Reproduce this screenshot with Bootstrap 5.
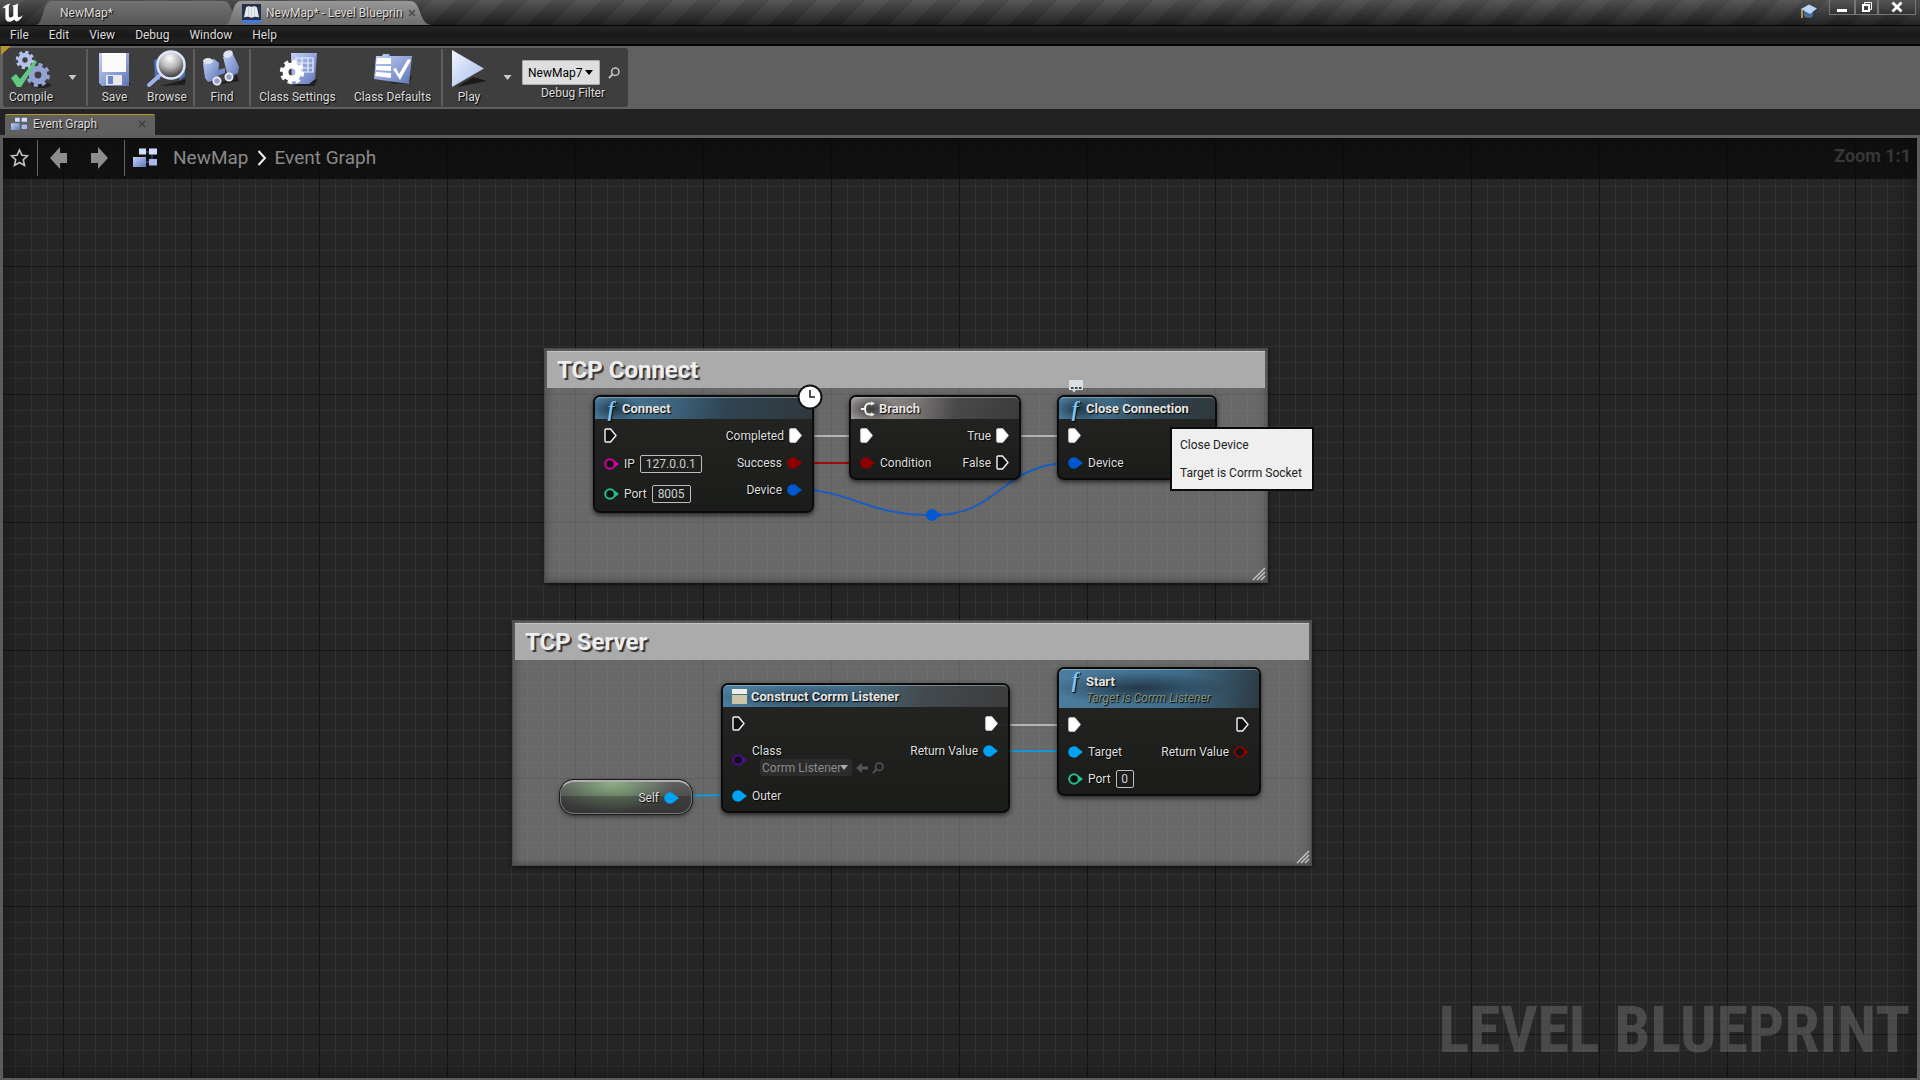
<!DOCTYPE html>
<html lang="en">
<head>
<meta charset="utf-8">
<meta name="viewport" content="width=device-width, initial-scale=1">
<title>NewMap* - Level Blueprint</title>
<link href="https://cdn.jsdelivr.net/npm/bootstrap@5.3.0/dist/css/bootstrap.min.css" rel="stylesheet">
<style>
body{font-family:Roboto,"Liberation Sans",sans-serif;font-size:12px;line-height:16px;color:#dcdcdc;background:#222;height:100vh;min-height:900px;overflow:hidden}
a{color:inherit;text-decoration:none}
button{background:none;border:0;padding:0;color:inherit;font:inherit}
svg{display:block;flex:none}
.shade{text-shadow:1px 1px 1px #000}

/* title bar */
.titlebar{height:25px;background:linear-gradient(rgba(255,255,255,.14),rgba(0,0,0,.4)),repeating-linear-gradient(135deg,#3b3b3b 0 17px,#303030 17px 34px)}
.ue-logo{width:36px;padding:3px 0 0 2px}
.wintab{position:relative;height:24px;margin-top:1px;padding-left:24px;gap:5px}
.wintab>svg.shape{position:absolute;left:0;top:0}
.wintab>*{position:relative}
.wintab.first{width:196px}
.wintab.active-win{width:206px;margin-left:-7px;padding-left:17px}
.closex{color:#555;font-size:12px}
.winbtn{height:15px;border:1px solid #777;border-top:0;background:linear-gradient(#555,#333);display:flex;align-items:center;justify-content:center}
.hat{margin:4px 11px 0 0}

/* menu */
.menubar{height:21px;border-top:1px solid #000;border-bottom:2px solid #050505;background:linear-gradient(#262626,#191919 50%,#222);padding-left:10px;gap:20px}

/* tool bar */
.toolstrip{background:#606060;padding:2px 0 2px 3px;height:63px}
.toolpanel{position:relative;background:#3e3e3e;border-radius:3px;height:59px;width:625px}
.corner{position:absolute;left:-2px;top:-2px}
.tool{display:flex;flex-direction:column;align-items:center;justify-content:flex-end;height:57px;text-shadow:1px 1px 1px #000;white-space:nowrap}
.tool svg{margin-bottom:1px}
.vsep{width:2px;height:57px;margin-top:1px;background:#5c5c5c}
.caret{width:8px;height:5px;background:#c8c8c8;clip-path:polygon(0 0,100% 0,50% 100%)}
.debug-select{width:78px;height:25px;border:1px solid #aaa;background:#dedede url("data:image/svg+xml,%3Csvg xmlns='http://www.w3.org/2000/svg' width='8' height='5'%3E%3Cpath d='M0 0h8L4 5z'/%3E%3C/svg%3E") no-repeat right 6px center;appearance:none;color:#000;padding:0 0 0 5px;font:inherit;border-radius:1px}

/* document tab */
.doctabs{height:26px;padding:5px 0 0 5px}
.doctab{width:150px;height:21px;background:#606060;border-top:1px solid #b49b1e;border-radius:2px 2px 0 0;padding:0 9px 2px 6px;gap:6px}

/* graph */
.graph{position:relative;border:3px solid #5c5c5c;border-bottom-width:2px;flex:1 1 auto;overflow:hidden;
 background-color:#262626;
 background-image:linear-gradient(90deg,#151515 1px,transparent 1px),linear-gradient(#151515 1px,transparent 1px),linear-gradient(90deg,#323232 1px,transparent 1px),linear-gradient(#323232 1px,transparent 1px);
 background-size:128px 128px,128px 128px,16px 16px,16px 16px;background-position:60px 0,0 0,12px 0,0 0}
.vignette{position:absolute;inset:0;box-shadow:inset 0 0 34px rgba(0,0,0,.45);pointer-events:none}
.crumbs{position:relative;height:41px;background:rgba(8,8,8,.72);color:#8a8a8a;font-size:19px;line-height:24px;padding:0 6px 2px 7px}
.crumbs .bar{width:1px;height:36px;background:#666}
.zoomtxt{color:#373737;font-size:18px;font-weight:700;padding-bottom:4px}
.watermark{position:absolute;right:7px;bottom:11px;font-family:"Roboto Condensed","Liberation Sans Narrow",Roboto,sans-serif;font-size:64px;line-height:72px;font-weight:700;color:rgba(160,160,160,.3);white-space:nowrap}

.remark{position:absolute;background:rgba(170,170,170,.5);border:1px solid #4c4c4c;padding:2px;box-shadow:0 2px 5px rgba(0,0,0,.6),inset 0 0 8px rgba(0,0,0,.35)}
.remark h2{margin:0;height:37px;background:#ababab;border-top:1px solid #c4c4c4;color:#eee;font-size:24px;font-weight:700;line-height:36px;padding-left:10px;text-shadow:2px 2px 1px #333}
.grip{position:absolute;right:1px;bottom:1px}
#c1{left:541px;top:210px;width:724px;height:235px}
#c2{left:509px;top:482px;width:800px;height:246px}
.wires{position:absolute;left:0;top:0}

.node{position:absolute;border:2px solid #0b0b0b;border-radius:7px;background:linear-gradient(rgba(33,34,32,.95),rgba(24,26,23,.97));box-shadow:0 2px 5px rgba(0,0,0,.65);color:#dedede;text-shadow:1px 1px 1px #000}
.nhead{display:flex;align-items:center;height:22px;border-radius:5px 5px 0 0;font-size:13px;font-weight:700;color:#e6e6e6;padding-left:9px;gap:4px;border-top:1px solid rgba(190,215,230,.45)}
.blue{background:radial-gradient(ellipse 26px 13px at 20px 11px,rgba(20,32,42,.75),transparent),linear-gradient(100deg,#4c7d9e 0,#3e657f 35%,#2f4452 60%,#30383c)}
.grey{background:radial-gradient(ellipse 26px 13px at 20px 11px,rgba(40,36,36,.8),transparent),linear-gradient(100deg,#a09c9c 0,#777373 40%,#4a4949 62%,#3b3b3b)}
.steel{background:radial-gradient(ellipse 90px 12px at 80px 12px,rgba(20,32,42,.55),transparent),linear-gradient(100deg,#4c7d9e 0,#44708c 40%,#434a4e 70%,#3c3c3c)}
.tall{height:39px;align-items:flex-start;background:radial-gradient(ellipse 90px 16px at 80px 18px,rgba(20,32,42,.7),transparent),linear-gradient(100deg,#4c7d9e 0,#3f6c8a 60%,#2c3a42)}
.fn{font-family:"Liberation Serif",serif;font-style:italic;font-weight:700;font-size:20px;line-height:20px;color:#7cc4f5;width:14px;text-align:center}
.sub{font-size:12px;font-weight:400;font-style:italic;color:#83917b}
.nbody{display:flex;justify-content:space-between;padding:3px 10px 2px 9px}
.pin{display:flex;align-items:center;height:27px;gap:5px}
.pin.out{justify-content:flex-end}
.pin.field{height:30px}
.pin.classrow{height:45px}
.slot{width:15px;display:flex;flex:none}
.pinbox{height:18px;background:transparent;border:1px solid #bdbdbd;border-radius:2px;color:#cfcfcf;font:inherit;padding:0;text-align:center}
.class-select{width:92px;height:17px;border:0;border-radius:3px;appearance:none;color:#8b8b8b;font:inherit;line-height:16px;padding:0 0 0 2px;background:#2b2c2b url("data:image/svg+xml,%3Csvg xmlns='http://www.w3.org/2000/svg' width='8' height='5'%3E%3Cpath fill='%23aaa' d='M0 0h8L4 5z'/%3E%3C/svg%3E") no-repeat right 4px center}
#n-connect{left:590px;top:257px;width:221px}
#n-branch{left:846px;top:257px;width:172px}
#n-close{left:1054px;top:257px;width:160px}
#n-construct{left:718px;top:545px;width:289px}
#n-start{left:1054px;top:529px;width:204px}
#n-self{left:557px;top:642px;width:132px;height:34px;border-radius:14px;border:1px solid #777;border-top:2px solid #b0b0b0;padding-right:12px;background:linear-gradient(rgba(255,255,255,.1),rgba(255,255,255,.02) 45%,rgba(0,0,0,.2) 46%,rgba(0,0,0,.3)),radial-gradient(ellipse 62px 30px at 52px 2px,#7fa577,transparent),#4c4c4c;box-shadow:0 0 0 1px #1c1c1c,0 2px 5px rgba(0,0,0,.6)}
.latent{position:absolute;right:-11px;top:-13px}
.bubble{position:absolute;left:9px;top:-17px}
.tipbox{position:absolute;left:1167px;top:289px;background:#efefef;border:2px solid #0a0a0a;color:#222;padding:7px 8px;line-height:18px;white-space:nowrap;width:144px}
.tipbox p{margin:0 0 10px}
.tipbox p:last-child{margin:0}
</style>
</head>
<body class="d-flex flex-column">

<svg width="0" height="0" class="position-absolute" aria-hidden="true">
 <defs>
  <linearGradient id="gBlue" x1="0" y1="0" x2="1" y2="1"><stop offset="0" stop-color="#c3d2fb"/><stop offset="1" stop-color="#6076b5"/></linearGradient>
  <linearGradient id="gPlay" x1="0" y1="0" x2="1" y2="1"><stop offset="0" stop-color="#f0f4ff"/><stop offset="1" stop-color="#a5bde8"/></linearGradient>
  <linearGradient id="gTab" x1="0" y1="0" x2="0" y2="1"><stop offset="0" stop-color="#727272"/><stop offset="1" stop-color="#565656"/></linearGradient>
  <linearGradient id="gTabA" x1="0" y1="0" x2="0" y2="1"><stop offset="0" stop-color="#989898"/><stop offset="1" stop-color="#6e6e6e"/></linearGradient>
  <radialGradient id="gLens" cx=".45" cy=".25" r=".8"><stop offset="0" stop-color="#fff"/><stop offset=".45" stop-color="#b5b5b5"/><stop offset="1" stop-color="#1c1c1c"/></radialGradient>
  <g id="cog">
   <circle r="6.500" fill="none" stroke-width="6"/>
   <circle r="10.200" fill="none" stroke-width="4" stroke-dasharray="4.200 3.810"/>
  </g>
  <symbol id="exec" viewBox="0 0 13 15"><path d="M2 1h4.500L12 7.500 6.500 14H2a1 1 0 0 1-1-1V2a1 1 0 0 1 1-1z" stroke="#f4f4f4" stroke-width="1.400" stroke-linejoin="round"/></symbol>
  <symbol id="dot" viewBox="0 0 15 12"><circle cx="6" cy="6" r="4.800" stroke="currentColor" stroke-width="2"/><path d="M11 3l4 3-4 3z" fill="currentColor"/></symbol>
  <symbol id="graphico" viewBox="0 0 24 20"><path d="M7 4h12M19 4v12M7 14h12" stroke="#5a6a9c" fill="none"/><path d="M6 .5h7v6H6zM16 .5h8v6h-8z" fill="#d3defb"/><path d="M0 9h13v10H0z" fill="url(#gBlue)"/><path d="M16 11h8v6.500h-8z" fill="#a9b9ee"/></symbol>
  <symbol id="mag" viewBox="0 0 14 14"><circle cx="8.500" cy="5.500" r="4.300" fill="none" stroke="currentColor" stroke-width="1.800"/><path d="M5.500 8.500L1 13" stroke="currentColor" stroke-width="2.200"/></symbol>
 </defs>
</svg>

<header class="titlebar d-flex align-items-start flex-shrink-0">
 <div class="ue-logo"><svg width="22" height="19" viewBox="0 0 22 19" fill="#fff"><path d="M0 6C1.500 3 4.500 1.200 8.500.500 7 1.800 6.800 2.500 6.800 4v8.500c0 1.300.6 1.900 1.500 1.900 1 0 2.200-.7 3-1.700V4.400c0-.9-.3-1.300-1.300-1.600C12.500 2.200 14.800 1.400 16.500 0c-.5.900-.7 1.500-.7 2.800v9.700c0 1.200.5 1.700 1.300 1.700.9 0 2.200-.6 3.900-2.200-1.700 3.500-3.800 5.700-6.400 6.500-1-.4-1.800-1-2.300-1.900-1.300 1.300-2.900 2-4.800 2.100C4.700 18.700 3.400 17 3.400 14.500V6.200C3.400 5.200 3 4.800 2.300 4.800 1.600 4.800.8 5.200 0 6z"/></svg></div>
 <div class="wintab first d-flex align-items-center shade"><svg class="shape" width="202" height="24"><path d="M0 24C8 23 6 0 16 0H188c8 0 8 16 14 24z" fill="url(#gTab)"/></svg><a href="#">NewMap*</a></div>
 <div class="wintab active-win d-flex align-items-center shade"><svg class="shape" width="212" height="24"><path d="M0 24C8 23 6 0 16 0H185c12 0 8 22 21 24z" fill="url(#gTabA)"/></svg>
  <svg width="19" height="20" viewBox="0 0 19 20"><path d="M0 1h19v18H0z" fill="#26304a"/><path d="M0 17h19v3H0z" fill="#3f78e8"/><path d="M2 14.500L4 4.500C5.500 3 8 3 9.500 4 11 3 13.500 3 15 4.500L17 14.500c-2.500-1.200-5.500-.8-7.500.6-2-1.400-5-1.800-7.500-.6z" fill="#e8ecf0"/><path d="M9.500 4.500v10M6.500 4v9M12.500 4v9" stroke="#b9c1ca" stroke-width=".7"/></svg>
  <a href="#" class="text-nowrap">NewMap* - Level Blueprin</a><button class="closex" aria-label="Close tab"><svg width="8" height="8" stroke="#4a4a4a" stroke-width="1.500"><path d="M1 1l6 6M7 1L1 7"/></svg></button></div>
 <div class="ms-auto d-flex pe-1">
  <svg class="hat" width="18" height="16" viewBox="0 0 18 16"><path d="M4 7v5c2 2.500 7 2.500 9 0V6z" fill="#4a6d96"/><path d="M1 5l8-4.500L17 4.500l-7 5.500z" fill="#b8d5f5"/><path d="M2 5v9" stroke="#d4a968" stroke-width="1.600"/></svg>
  <button class="winbtn" style="width:26px" aria-label="Minimize"><svg width="12" height="12"><path d="M1 8h10v3H1z" fill="#fff"/></svg></button>
  <button class="winbtn" style="width:23px" aria-label="Restore"><svg width="12" height="12" fill="none" stroke="#fff"><path d="M3.500 3V1.500h7v7H9"/><path d="M2 4h6v6H2z" stroke-width="2"/></svg></button>
  <button class="winbtn" style="width:38px" aria-label="Close"><svg width="12" height="12" stroke="#fff" stroke-width="2.800"><path d="M1.500 1.500l9 9M10.500 1.500l-9 9"/></svg></button>
 </div>
</header>

<nav class="menubar d-flex align-items-center flex-shrink-0 shade">
 <a href="#">File</a><a href="#">Edit</a><a href="#">View</a><a href="#">Debug</a><a href="#">Window</a><a href="#">Help</a>
</nav>

<div class="toolstrip flex-shrink-0">
 <div class="toolpanel d-flex">
  <svg class="corner" width="10" height="9"><path d="M0 0h10L0 9z" fill="#b8962a"/></svg>
  <button class="tool" style="width:56px"><svg width="40" height="38" viewBox="0 0 40 38"><ellipse cx="30" cy="35" rx="10" ry="3" fill="#222"/><g transform="translate(14 10) scale(.76)" stroke="#b3c2ea"><use href="#cog"/></g><g transform="translate(27 25) scale(.98)" stroke="#93a3d3"><use href="#cog"/></g><path d="M0 28l5-4 4 5L24 10l2 2L10 37H6z" fill="#62c983"/></svg>Compile</button>
  <button class="d-flex align-items-center justify-content-center" style="width:27px" aria-label="Compile options"><span class="caret"></span></button>
  <span class="vsep"></span>
  <button class="tool" style="width:53px"><svg width="36" height="37" viewBox="0 0 36 37"><path d="M6 36l28-2-4-6z" fill="#1e1e1e"/><path d="M2 2h30v33H5l-3-3z" fill="url(#gBlue)"/><path d="M5 2h24v19H5z" fill="#fafafa"/><path d="M9 24h16v10H9z" fill="#e9e9e9"/><path d="M11 25h5v8h-5z" fill="#6b84c9"/></svg>Save</button>
  <button class="tool" style="width:52px"><svg width="40" height="38" viewBox="0 0 40 38"><path d="M14 36l24-1 1-6z" fill="#1e1e1e"/><path d="M7 10l6-2v22H8zM33 8h5v18l-6 5z" fill="#5370b6"/><path d="M12 26L2 35" stroke="#9db2e6" stroke-width="4" stroke-linecap="round"/><circle cx="24" cy="15" r="13.500" fill="url(#gLens)" stroke="#dbe5fb" stroke-width="2.500"/></svg>Browse</button>
  <span class="vsep"></span>
  <button class="tool" style="width:54px"><svg width="40" height="38" viewBox="0 0 40 38"><path d="M14 35l23-4-2-6z" fill="#1e1e1e"/><path d="M1 13l11-4 5 4-1 16-10 3-3-4z" fill="url(#gBlue)"/><path d="M21 7l9-5 7 15-1 6-10 4z" fill="url(#gBlue)"/><ellipse cx="6" cy="11" rx="5" ry="3" fill="#dfe4f0"/><ellipse cx="26" cy="4" rx="5" ry="3.500" fill="#dfe4f0" transform="rotate(-25 26 4)"/><path d="M15 20l8-2v5l-8 3z" fill="#7689c4"/><circle cx="15" cy="31" r="3.600" fill="#8fa0cf" stroke="#eee" stroke-width="1.800"/><circle cx="27" cy="27" r="3.600" fill="#8fa0cf" stroke="#eee" stroke-width="1.800"/></svg>Find</button>
  <span class="vsep"></span>
  <button class="tool" style="width:93px"><svg width="40" height="38" viewBox="0 0 40 38"><path d="M14 36h22l4-7z" fill="#1e1e1e"/><path d="M13 3h26l-2 26-6 5H14z" fill="url(#gBlue)"/><path d="M18 8h17v14H18zM24 8v14M30 8v14M18 13h17M18 18h17" fill="none" stroke="#e9f0ff" stroke-width="1.200"/><g transform="translate(14 22)" stroke="#fff"><use href="#cog"/></g></svg>Class Settings</button>
  <button class="tool" style="width:97px"><svg width="40" height="38" viewBox="0 0 40 38"><path d="M16 33l20 1 3-8z" fill="#1e1e1e"/><path d="M3 6h6l1-2h6l1 2h22l-3 28L1 29z" fill="url(#gBlue)"/><path d="M4 8h14v6L3 14zM3 16h15v5l-15-1zM3 22l15 1v5L2 26z" fill="#fff"/><path d="M20 19l3-1 3 6L35 9l3 1-11 20z" fill="#fff"/></svg>Class Defaults</button>
  <span class="vsep"></span>
  <button class="tool" style="width:52px"><svg width="40" height="39" viewBox="0 0 40 39"><path d="M8 38l30-6-14-4z" fill="#1a1a1a"/><path d="M3 1l32 18.500L3 38z" fill="url(#gPlay)"/></svg>Play</button>
  <button class="d-flex align-items-center justify-content-center" style="width:25px" aria-label="Play options"><span class="caret"></span></button>
  <div class="d-flex flex-column" style="padding:12px 0 0 2px">
   <div class="d-flex align-items-center gap-2"><select id="dbg" class="debug-select"><option>NewMap7</option></select><button aria-label="Find object" style="color:#c4c4c4"><svg width="12" height="14"><use href="#mag"/></svg></button></div>
   <label for="dbg" class="shade text-center ps-1">Debug Filter</label>
  </div>
 </div>
</div>

<div class="doctabs flex-shrink-0">
 <div class="doctab d-flex align-items-center shade"><svg width="16" height="14"><use href="#graphico"/></svg><a href="#">Event Graph</a><button class="closex ms-auto" aria-label="Close graph"><svg width="8" height="8" stroke="#3c3c3c" stroke-width="1.200"><path d="M1 1l6 6M7 1L1 7"/></svg></button></div>
</div>

<main class="graph">
 <div class="remark" id="c1"><h2>TCP Connect</h2><svg class="grip" width="14" height="14" stroke="#ccc" stroke-width="1.300"><path d="M1 13L13 1M5 13l8-8M9 13l4-4"/></svg></div>
 <div class="remark" id="c2"><h2>TCP Server</h2><svg class="grip" width="14" height="14" stroke="#ccc" stroke-width="1.300"><path d="M1 13L13 1M5 13l8-8M9 13l4-4"/></svg></div>

 <svg class="wires" width="1400" height="760" viewBox="3 138 1400 760" fill="none" stroke-width="2">
  <path d="M800 436H860M1010 436h60M995 725h70" stroke="#b4b4b4"/>
  <path d="M800 463H862" stroke="#a00a0a"/>
  <path d="M800 489C850 491 870 515 928 515M935 515C1000 515 1000 465 1068 463" stroke="#1a5cc4"/>
  <circle cx="932" cy="515" r="6" fill="#0058d0"/><path d="M938 512l4 3-4 3z" fill="#0058d0"/>
  <path d="M675 796L735 795M990 751h80" stroke="#1197dc"/>
 </svg>

 <section class="node" id="n-connect">
  <div class="nhead blue"><span class="fn">f</span>Connect</div>
  <div class="nbody">
   <div><div class="pin"><span class="slot"><svg width="13" height="15" fill="#111"><use href="#exec"/></svg></span></div>
    <div class="pin field"><svg width="15" height="12" color="#d800a8" fill="#111"><use href="#dot"/></svg><label for="ip">IP</label><input id="ip" class="pinbox" style="width:62px" value="127.0.0.1"></div>
    <div class="pin field"><svg width="15" height="12" color="#1fbf8f" fill="#111"><use href="#dot"/></svg><label for="port">Port</label><input id="port" class="pinbox" style="width:39px" value="8005"></div></div>
   <div><div class="pin out">Completed<svg width="13" height="15" fill="#fff"><use href="#exec"/></svg></div>
    <div class="pin out">Success<svg width="15" height="12" color="#8f0000" fill="#8f0000"><use href="#dot"/></svg></div>
    <div class="pin out">Device<svg width="15" height="12" color="#0058d0" fill="#0058d0"><use href="#dot"/></svg></div></div>
  </div>
  <svg class="latent" width="26" height="26"><circle cx="13" cy="13" r="11.500" fill="#fff" stroke="#111" stroke-width="2"/><path d="M13 6v7h5" fill="none" stroke="#222" stroke-width="1.600"/></svg>
 </section>

 <section class="node" id="n-branch">
  <div class="nhead grey"><svg width="15" height="16" fill="none" stroke="#f2f2f2" stroke-width="2"><path d="M1 8h4M13 2.500H9C6.500 2.500 5 5 5 8s1.500 5.500 4 5.500h4"/><path d="M11 .5l4 2-4 2zM11 11.500l4 2-4 2z" fill="#f2f2f2" stroke="none"/></svg>Branch</div>
  <div class="nbody">
   <div><div class="pin"><span class="slot"><svg width="13" height="15" fill="#fff"><use href="#exec"/></svg></span></div>
    <div class="pin"><svg width="15" height="12" color="#8f0000" fill="#8f0000"><use href="#dot"/></svg>Condition</div></div>
   <div><div class="pin out">True<svg width="13" height="15" fill="#fff"><use href="#exec"/></svg></div>
    <div class="pin out">False<svg width="13" height="15" fill="#111"><use href="#exec"/></svg></div></div>
  </div>
 </section>

 <section class="node" id="n-close">
  <svg class="bubble" width="16" height="13"><path d="M1 0h14v10H8l-2 2.500L4 10H1z" fill="#d8dfe5"/><path d="M3 8h2.500M7 8h2.500M11 8h2.500" stroke="#39424b" stroke-width="2.200"/></svg>
  <div class="nhead blue"><span class="fn">f</span>Close Connection</div>
  <div class="nbody"><div>
   <div class="pin"><span class="slot"><svg width="13" height="15" fill="#fff"><use href="#exec"/></svg></span></div>
   <div class="pin"><svg width="15" height="12" color="#0058d0" fill="#0058d0"><use href="#dot"/></svg>Device</div></div></div>
 </section>

 <section class="node" id="n-construct">
  <div class="nhead steel"><svg width="15" height="15"><path d="M0 0h15v5H0z" fill="#f0efe6"/><path d="M0 6h15v9H0z" fill="#cbc6a8"/></svg>Construct Corrm Listener</div>
  <div class="nbody">
   <div><div class="pin"><span class="slot"><svg width="13" height="15" fill="#111"><use href="#exec"/></svg></span></div>
    <div class="pin classrow"><svg width="15" height="12" color="#4b0d9c" fill="#111"><use href="#dot"/></svg>
     <div class="d-flex flex-column"><label for="cls">Class</label>
      <div class="d-flex align-items-center gap-1 ps-2"><select id="cls" class="class-select"><option>Corrm Listener</option></select>
       <button aria-label="Use selected"><svg width="12" height="12" fill="#555"><path d="M0 6l6-5v3.500h6v3H6V11z"/></svg></button>
       <button aria-label="Browse to class" style="color:#555"><svg width="12" height="12"><use href="#mag"/></svg></button></div></div></div>
    <div class="pin"><svg width="15" height="12" color="#00a2f2" fill="#00a2f2"><use href="#dot"/></svg>Outer</div></div>
   <div><div class="pin out"><svg width="13" height="15" fill="#fff"><use href="#exec"/></svg></div>
    <div class="pin out">Return Value<svg width="15" height="12" color="#00a2f2" fill="#00a2f2"><use href="#dot"/></svg></div></div>
  </div>
 </section>

 <section class="node" id="n-start">
  <div class="nhead tall"><span class="fn">f</span><div class="pt-1"><div>Start</div><div class="sub">Target is Corrm Listener</div></div></div>
  <div class="nbody">
   <div><div class="pin"><span class="slot"><svg width="13" height="15" fill="#fff"><use href="#exec"/></svg></span></div>
    <div class="pin"><svg width="15" height="12" color="#00a2f2" fill="#00a2f2"><use href="#dot"/></svg>Target</div>
    <div class="pin"><svg width="15" height="12" color="#1fbf8f" fill="#111"><use href="#dot"/></svg><label for="port2">Port</label><input id="port2" class="pinbox" style="width:18px" value="0"></div></div>
   <div><div class="pin out"><svg width="13" height="15" fill="#111"><use href="#exec"/></svg></div>
    <div class="pin out">Return Value<svg width="15" height="12" color="#8f0000" fill="#111"><use href="#dot"/></svg></div></div>
  </div>
 </section>

 <section class="node d-flex align-items-center justify-content-end" id="n-self"><div class="pin">Self<svg width="15" height="12" color="#00a2f2" fill="#00a2f2"><use href="#dot"/></svg></div></section>

 <div class="tipbox" role="tooltip"><p>Close Device</p><p>Target is Corrm Socket</p></div>

 <div class="vignette"></div>
 <div class="watermark">LEVEL BLUEPRINT</div>

 <nav class="crumbs d-flex align-items-center" aria-label="Graph path">
  <button aria-label="Favourite"><svg width="19" height="20" fill="none" stroke="#c4c4c4" stroke-width="1.600"><path d="M9.500 2l2.400 5.200 5.600.6-4.200 3.900 1.200 5.700-5-2.900-5 2.900 1.200-5.700L1.500 7.800l5.600-.6z"/></svg></button>
  <span class="bar ms-2"></span>
  <button class="ms-2 ps-1" aria-label="Back"><svg width="17" height="22" fill="#8d8d8d"><path d="M0 11L10 0v6h7v10h-7v6z"/></svg></button>
  <button class="ms-4" aria-label="Forward"><svg width="17" height="22" fill="#8d8d8d"><path d="M17 11L7 0v6H0v10h7v6z"/></svg></button>
  <span class="bar ms-3"></span>
  <svg class="ms-2 me-3" width="24" height="20"><use href="#graphico"/></svg>
  <a href="#">NewMap</a>
  <svg class="mx-2" width="10" height="16" fill="none" stroke="#f0f0f0" stroke-width="2"><path d="M1.500 1l6.500 7-6.500 7"/></svg>
  <a href="#">Event Graph</a>
  <span class="zoomtxt ms-auto">Zoom 1:1</span>
 </nav>
</main>
<script src="https://cdn.jsdelivr.net/npm/bootstrap@5.3.0/dist/js/bootstrap.bundle.min.js"></script>
</body>
</html>
